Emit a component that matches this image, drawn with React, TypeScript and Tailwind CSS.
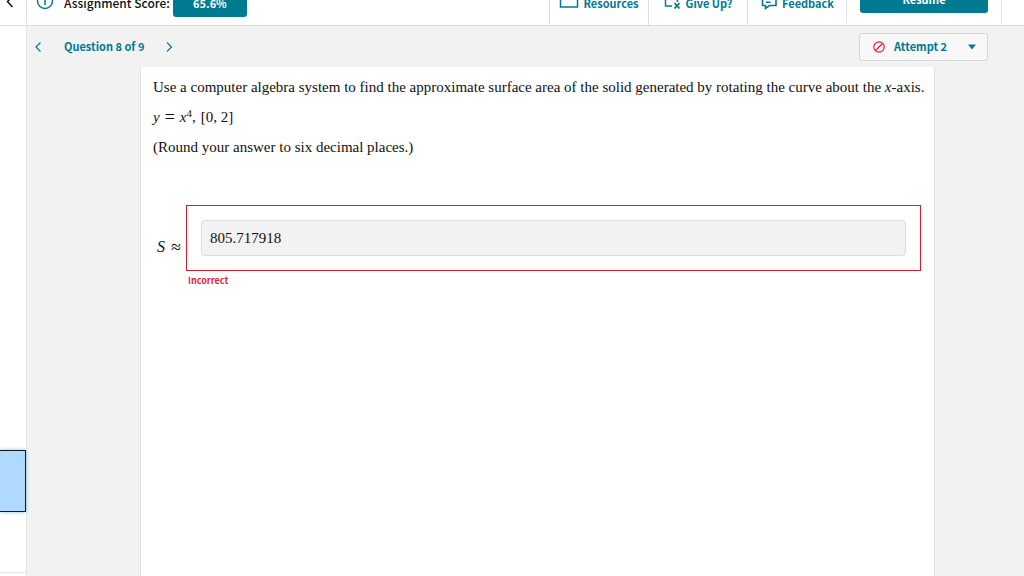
import type { ReactNode } from 'react';

interface ToolProps {
    label: string;
    icon: ReactNode;
}

function ToolButton({ label, icon }: ToolProps) {
    return (
        <button className="flex h-full w-[99px] items-center justify-center gap-1 border-l border-[#dedede] text-[11px] font-bold text-[#007a90]">
            {icon}
            {label}
        </button>
    );
}

function Sidebar() {
    return (
        <aside className="flex w-[27px] shrink-0 flex-col border-r border-[#e4e4e4] bg-white">
            <div className="flex h-[26px] flex-col border-b border-[#dedede]">
                <button aria-label="Collapse sidebar" className="w-full">
                    <svg width="20" height="10" viewBox="0 0 20 10" fill="none" stroke="#111" strokeWidth="1.5">
                        <path d="M13 -4L7.500 1.500L12.500 7" />
                    </svg>
                </button>
            </div>
            <nav className="flex flex-col pt-[424px]">
                <button
                    aria-label="Question 8"
                    className="h-[62px] w-full border-y border-r border-[#111820] bg-[#b0d9ff] shadow-[0_0_4px_#8cc5cf]"
                />
                <div className="h-[61px] border-b border-[#e4e4e4]" />
            </nav>
        </aside>
    );
}

function Header() {
    return (
        <header className="flex h-[26px] flex-col justify-end overflow-hidden border-b border-[#dadada] bg-white">
            <div className="flex h-11 shrink-0 items-center">
                <button aria-label="Score details" className="ml-2">
                    <svg width="20" height="20" viewBox="0 0 20 20" fill="none" stroke="#007a90" strokeWidth="1.500">
                        <circle cx="10" cy="8" r="7.500" />
                        <path d="M10 7v5M10 4v1.500" strokeWidth="1.500" />
                    </svg>
                </button>
                <span className="ml-[9px] text-xs font-medium text-[#111]">Assignment Score:</span>
                <span className="ml-[3px] flex h-7 w-[74px] items-center justify-center rounded-[3px] bg-[#007a90] text-[11px] font-bold text-white">
                    65.6%
                </span>
                <div className="ml-auto flex h-full">
                    <ToolButton
                        label="Resources"
                        icon={
                            <svg width="20" height="20" viewBox="0 0 20 20" fill="none" stroke="#007a90" strokeWidth="1.500">
                                <path d="M1.500 2v12h17V2z" />
                            </svg>
                        }
                    />
                    <ToolButton
                        label="Give Up?"
                        icon={
                            <svg width="18" height="20" viewBox="0 0 18 20" fill="none" stroke="#007a90" strokeWidth="1.500">
                                <path d="M1.500 2v11h6.500M13.500 2v7" />
                                <path d="M10.500 10l5 5.500M15.500 10l-5 5.500" strokeWidth="1.800" />
                            </svg>
                        }
                    />
                    <ToolButton
                        label="Feedback"
                        icon={
                            <svg width="18" height="20" viewBox="0 0 18 20" fill="none" stroke="#007a90" strokeWidth="1.600">
                                <path d="M2.500 2v10.500h3v3l4-3h6.500V2z" />
                                <path d="M6 9.200h4.500M6 6h8" />
                            </svg>
                        }
                    />
                </div>
                <div className="flex h-full items-end border-x border-[#e4e4e4] px-[13px] pb-3">
                    <button className="h-7 w-32 rounded-[3px] bg-[#007a90] text-[11px] font-bold text-white">Resume</button>
                </div>
                <div className="w-[22px]" />
            </div>
        </header>
    );
}

function QuestionBar() {
    return (
        <div className="flex h-[41px] items-center pr-9 pl-1 text-[11px] font-bold text-[#007a90]">
            <button aria-label="Previous question" className="px-1">
                <svg width="7" height="12" viewBox="0 0 7 12" fill="none" stroke="currentColor" strokeWidth="1.200">
                    <path d="M5.500 1.500L1 6L5.500 10.500" />
                </svg>
            </button>
            <span className="ml-[18px]">Question 8 of 9</span>
            <button aria-label="Next question" className="ml-[18px] px-1">
                <svg width="7" height="12" viewBox="0 0 7 12" fill="none" stroke="currentColor" strokeWidth="1.200">
                    <path d="M1 1.500L5.500 6L1 10.500" />
                </svg>
            </button>
            <button className="ml-auto flex h-7 w-[129px] items-center rounded-[3px] border border-[#d5d5d5] bg-[#f8f8f8] pr-[11px] pl-3">
                <svg width="14" height="14" viewBox="0 0 14 14" fill="none" stroke="#e01f36" strokeWidth="1.200">
                    <circle cx="7" cy="7" r="5.200" />
                    <path d="M3.500 10.500L10.500 3.500" />
                </svg>
                <span className="ml-2">Attempt 2</span>
                <svg className="ml-auto" width="8" height="6" viewBox="0 0 8 6" fill="currentColor">
                    <path d="M0 0.500h8L4 5.500z" />
                </svg>
            </button>
        </div>
    );
}

function QuestionCard() {
    return (
        <main className="mr-[89px] ml-[113px] flex-1 border-x border-[#e0e0e0] bg-white pt-2 pr-1 pl-3 font-['Liberation_Serif',serif] text-[15px] text-[#111]">
            <p className="leading-6">
                Use a computer algebra system to find the approximate surface area of the solid generated by rotating the curve about the <i>x</i>-axis.
            </p>
            <p className="mt-[6px] flex gap-[5px] leading-6">
                <i>y</i>
                <span className="text-lg leading-6">=</span>
                <span>
                    <i>x</i>
                    <sup className="text-[11px]">4</sup>,
                </span>
                <span>[0, 2]</span>
            </p>
            <p className="mt-[6px] leading-6">(Round your answer to six decimal places.)</p>

            <div className="mt-[46px] mr-[9px] flex">
                <label htmlFor="answer" className="flex w-[33px] shrink-0 gap-[6px] pt-[30px] pl-1 text-base leading-6">
                    <i>S</i>
                    <span className="text-lg leading-6">≈</span>
                </label>
                <div className="flex-1">
                    <div className="border border-[#d0202f] p-[14px]">
                        <input
                            id="answer"
                            readOnly
                            defaultValue="805.717918"
                            className="block h-9 w-full rounded border border-[#dcdcdc] bg-[#f2f2f2] px-2 outline-none"
                        />
                    </div>
                    <p className="pl-[2px] font-['Noto_Sans_CJK_SC',sans-serif] text-[9px] leading-5 font-bold text-[#e01f36]">Incorrect</p>
                </div>
            </div>
        </main>
    );
}

export default function App() {
    return (
        <div className="flex min-h-screen bg-[#f2f2f2] font-['Noto_Sans_CJK_SC',sans-serif]">
            <Sidebar />
            <div className="flex min-w-0 flex-1 flex-col">
                <Header />
                <QuestionBar />
                <QuestionCard />
            </div>
        </div>
    );
}
